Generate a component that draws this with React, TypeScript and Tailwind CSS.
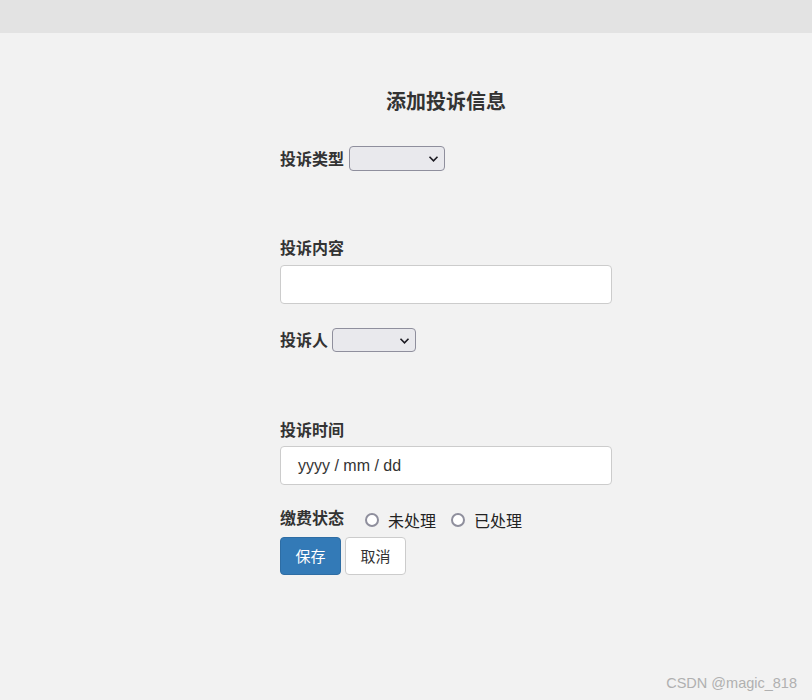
import React from "react";

const cjk = { fontFamily: '"Noto Sans CJK SC", "Liberation Sans", sans-serif' };

function Select({ width }: { width: string }) {
  return (
    <div className={`relative h-full ${width} rounded-[4px] border border-[#8f8f9d] bg-[#e9e9ed]`}>
      <svg className="absolute right-[5px] top-[8px]" width="11" height="8" viewBox="0 0 11 8">
        <path d="M1.5 1.8 L5.5 5.8 L9.5 1.8" fill="none" stroke="#1c1b22" strokeWidth="1.6" />
      </svg>
    </div>
  );
}

function Radio({ label }: { label: string }) {
  return (
    <div className="flex items-center">
      <span className="h-[14px] w-[14px] rounded-full border-2 border-[#8f8f9d] bg-white" />
      <span className="ml-[9px] text-[16px] leading-[22px] text-[#222]">{label}</span>
    </div>
  );
}

export default function App() {
  return (
    <div className="min-h-[700px] bg-[#f2f2f2] relative" style={cjk}>
      <div className="h-[33px] bg-[#e3e3e3]" />
      <div className="pl-[280px] w-[612px] text-[#333]">
        <div className="mt-[53px] h-[30px] text-center text-[20px] font-bold leading-[30px]">添加投诉信息</div>

        <div className="mt-[30px] flex h-[25px] items-center gap-[5px]">
          <span className="text-[16px] font-bold leading-[22px] -mt-[2px]">投诉类型</span>
          <Select width="w-[96px]" />
        </div>

        <div className="mt-[65px] h-[22px] text-[16px] font-bold leading-[22px]">投诉内容</div>
        <div className="mt-[7px] h-[39px] w-[332px] rounded-[4px] border border-[#ccc] bg-white" />

        <div className="mt-[24px] flex h-[24px] items-center gap-[4px]">
          <span className="text-[16px] font-bold leading-[22px] -mt-[2px]">投诉人</span>
          <Select width="w-[84px]" />
        </div>

        <div className="mt-[66px] h-[22px] text-[16px] font-bold leading-[22px]">投诉时间</div>
        <div className="mt-[6px] flex h-[39px] w-[332px] items-center rounded-[4px] border border-[#ccc] bg-white pl-[17px]">
          <span className="text-[16px] text-[#333]" style={{ fontFamily: '"Liberation Sans", Arial, sans-serif' }}>
            yyyy / mm / dd
          </span>
        </div>

        <div className="mt-[21px] flex h-[25px] items-start">
          <span className="text-[16px] font-bold leading-[22px]">缴费状态</span>
          <div className="ml-[21px] flex gap-[15px] pt-[3px]">
            <Radio label="未处理" />
            <Radio label="已处理" />
          </div>
        </div>

        <div className="mt-[6px] flex gap-[4px]">
          <button className="h-[38px] w-[61px] rounded-[4px] border border-[#2e6da4] bg-[#337ab7] text-[15px] text-white">保存</button>
          <button className="h-[38px] w-[61px] rounded-[4px] border border-[#ccc] bg-white text-[15px] text-[#333]">取消</button>
        </div>
      </div>
      <div
        className="absolute right-[15px] top-[673px] text-[14.5px] text-[#b0b0b0]"
        style={{ fontFamily: '"Liberation Sans", Arial, sans-serif' }}
      >
        CSDN @magic_818
      </div>
    </div>
  );
}
